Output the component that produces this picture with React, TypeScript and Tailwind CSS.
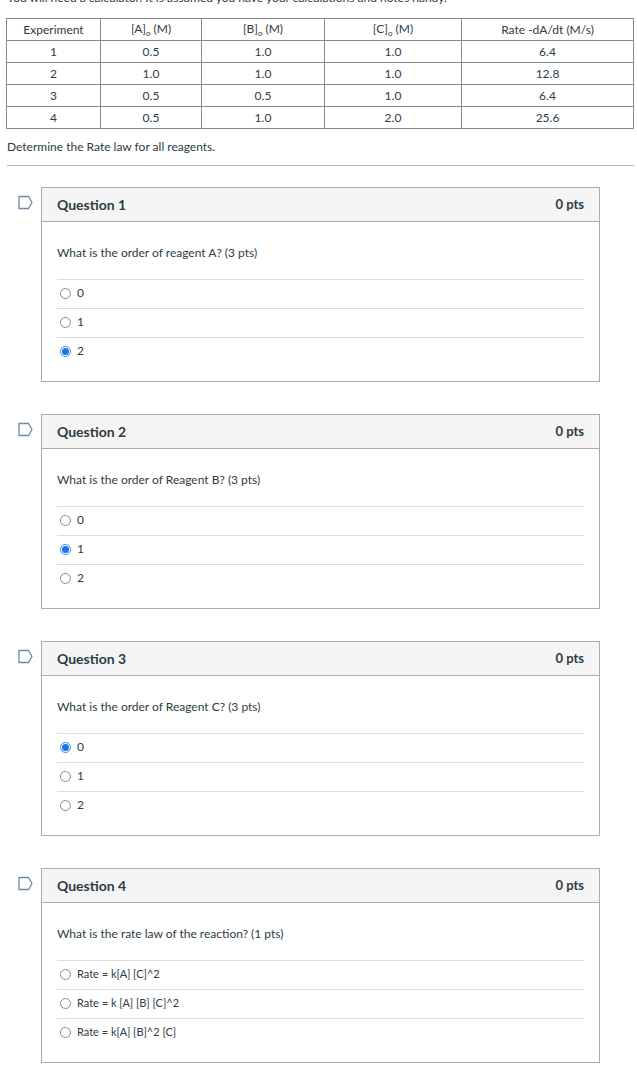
import React from 'react'

type Question = {
  title: string
  prompt: string
  answers: string[]
  selected: number | null
  small?: boolean
}

const rows = [
  ['1', '0.5', '1.0', '1.0', '6.4'],
  ['2', '1.0', '1.0', '1.0', '12.8'],
  ['3', '0.5', '0.5', '1.0', '6.4'],
  ['4', '0.5', '1.0', '2.0', '25.6'],
]

const questions: Question[] = [
  { title: 'Question 1', prompt: 'What is the order of reagent A? (3 pts)', answers: ['0', '1', '2'], selected: 2 },
  { title: 'Question 2', prompt: 'What is the order of Reagent B? (3 pts)', answers: ['0', '1', '2'], selected: 1 },
  { title: 'Question 3', prompt: 'What is the order of Reagent C? (3 pts)', answers: ['0', '1', '2'], selected: 0 },
  {
    title: 'Question 4',
    prompt: 'What is the rate law of the reaction? (1 pts)',
    answers: ['Rate = k[A] [C]^2', 'Rate = k [A] [B] [C]^2', 'Rate = k[A] [B]^2 [C]'],
    selected: null,
    small: true,
  },
]

function Conc({ s }: { s: string }) {
  return (
    <span>
      [{s}]<span className="relative top-[3px] text-[8px]">o</span> (M)
    </span>
  )
}

function Radio({ on }: { on: boolean }) {
  if (on) {
    return (
      <span className="flex h-[11px] w-[11px] items-center justify-center rounded-full border border-[#3b8cf0] bg-white">
        <span className="h-[7px] w-[7px] rounded-full bg-[#1a73e8]" />
      </span>
    )
  }
  return <span className="h-[11px] w-[11px] rounded-full border border-[#8a8a8a] bg-white" />
}

// little flag marker left of each question
function FlagIcon() {
  return (
    <svg width="16" height="15" viewBox="0 0 16 15" fill="none">
      <path d="M1 1.5 H10.5 L14 7.5 L10.5 13.5 H1 Z" stroke="#6b87a3" strokeWidth="1.3" strokeLinejoin="round" />
    </svg>
  )
}

function QuestionBox({ q }: { q: Question }) {
  return (
    <div className="flex">
      <div className="flex w-[41px] shrink-0 justify-start pl-[18px] pt-[8px]">
        <FlagIcon />
      </div>
      <div className="w-[559px] border border-[#acacac] bg-white">
        <div className="flex h-[34px] items-center justify-between border-b border-[#acacac] bg-[#f5f5f5] px-[15px]">
          <span className="text-[14px] font-bold text-[#2d3b45]">{q.title}</span>
          <span className="text-[13px] font-bold text-[#2d3b45]">0 pts</span>
        </div>
        <div className="px-[15px] pb-[15px] pt-[23px]">
          <p className="text-[12px] leading-[16px] text-[#2d3b45]">{q.prompt}</p>
          <div className="mt-[18px]">
            {q.answers.map((a, i) => (
              <div key={i} className="flex h-[29px] items-center gap-[6px] border-t border-[#dcdcdc] pl-[3px] pb-[2px]">
                <Radio on={q.selected === i} />
                <span className={q.small ? 'text-[11px] text-[#2d3b45]' : 'text-[12px] text-[#2d3b45]'}>{a}</span>
              </div>
            ))}
          </div>
        </div>
      </div>
    </div>
  )
}

export default function App() {
  return (
    <div className="flex w-[637px] flex-col bg-white pb-[3px] font-['Lato','Noto_Sans',sans-serif] text-[#2d3b45]">
      <p className="-mt-[10px] pl-[7px] text-[12px] leading-[16px]">
        You will need a calculator. It is assumed you have your calculations and notes handy.
      </p>

      <table className="ml-[6px] mt-[12px] w-[628px] border-collapse text-center text-[12px] leading-[14px]">
        <thead>
          <tr className="h-[22px]">
            <th className="w-[94px] border border-[#8a8a8a] font-normal">Experiment</th>
            <th className="w-[101px] border border-[#8a8a8a] font-normal"><Conc s="A" /></th>
            <th className="w-[123px] border border-[#8a8a8a] font-normal"><Conc s="B" /></th>
            <th className="w-[137px] border border-[#8a8a8a] font-normal"><Conc s="C" /></th>
            <th className="border border-[#8a8a8a] font-normal">Rate -dA/dt (M/s)</th>
          </tr>
        </thead>
        <tbody>
          {rows.map((r) => (
            <tr key={r[0]} className="h-[22px]">
              {r.map((c, i) => (
                <td key={i} className="border border-[#8a8a8a]">{c}</td>
              ))}
            </tr>
          ))}
        </tbody>
      </table>

      <p className="mt-[10px] pl-[7px] text-[12px] leading-[16px]">Determine the Rate law for all reagents.</p>

      <div className="ml-[7px] mt-[10px] w-[627px] border-t border-[#b5b5b5]" />

      <div className="mt-[21px] flex flex-col gap-[32px]">
        {questions.map((q) => (
          <QuestionBox key={q.title} q={q} />
        ))}
      </div>
    </div>
  )
}
